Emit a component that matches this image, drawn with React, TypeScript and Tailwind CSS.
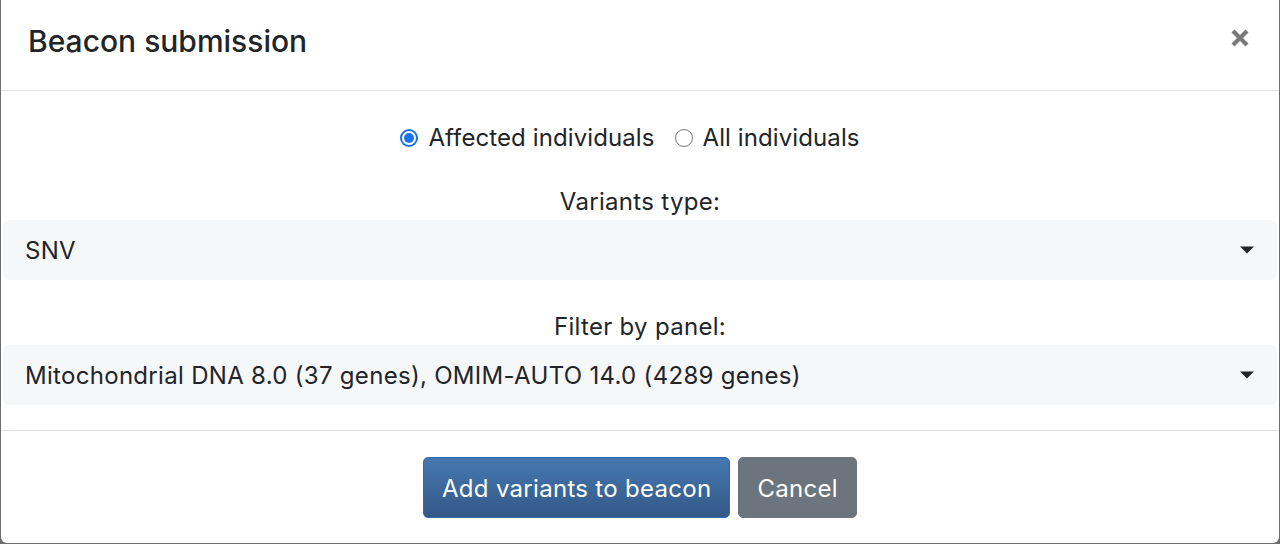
import React from "react";

function Radio({ checked }: { checked: boolean }) {
  return checked ? (
    <span className="flex h-[18px] w-[18px] shrink-0 items-center justify-center rounded-full bg-[#1a73e8]">
      <span className="flex h-[14px] w-[14px] items-center justify-center rounded-full bg-white">
        <span className="h-[10px] w-[10px] rounded-full bg-[#1a73e8]" />
      </span>
    </span>
  ) : (
    <span className="h-[18px] w-[18px] shrink-0 rounded-full border border-[#767676] bg-white" />
  );
}

function Caret() {
  return (
    <svg width="14" height="8" viewBox="0 0 14 8" className="shrink-0">
      <path d="M0 0.5 L14 0.5 L7 7.5 Z" fill="#212529" />
    </svg>
  );
}

function Select({ value }: { value: string }) {
  return (
    <div className="mx-[2px] flex h-[60px] items-center justify-between rounded-[6px] bg-[#f6f7f9] pl-[22px] pr-[23px]">
      <span className="pt-[2px]">{value}</span>
      <Caret />
    </div>
  );
}

export default function App() {
  return (
    <div
      className="h-[544px] w-[1280px] bg-[#6e6e6e] text-[#212529]"
      style={{ fontFamily: "Inter, 'Noto Sans', sans-serif" }}
    >
      <div className="ml-px flex h-[543px] w-[1278px] flex-col rounded-b-[6px] bg-white">
        <div className="flex h-[91px] shrink-0 items-start justify-between border-b border-[#dee2e6] pl-[27px] pr-[29px]">
          <h5 className="pt-[23px] text-[30px] font-medium leading-[36px]">
            Beacon submission
          </h5>
          <button className="mt-[28px]" aria-label="Close">
            <svg width="20" height="20" viewBox="0 0 20 20">
              <path
                d="M3 3 L17 17 M17 3 L3 17"
                stroke="#7a7a7a"
                strokeWidth="4.2"
                strokeLinecap="butt"
              />
            </svg>
          </button>
        </div>

        <div className="flex h-[339px] shrink-0 flex-col text-[24px] leading-[36px] tracking-[0.3px]">
          <div className="mt-[29px] flex h-[36px] items-center justify-center tracking-[0.1px]">
            <label className="flex items-center">
              <Radio checked />
              <span className="ml-[10px]">Affected individuals</span>
            </label>
            <label className="ml-[20px] mr-[20px] flex items-center">
              <Radio checked={false} />
              <span className="ml-[10px]">All individuals</span>
            </label>
          </div>
          <div className="mt-[27px] pt-px text-center">Variants type:</div>
          <Select value="SNV" />
          <div className="mt-[28px] pt-px text-center">Filter by panel:</div>
          <Select value="Mitochondrial DNA 8.0 (37 genes), OMIM-AUTO 14.0 (4289 genes)" />
        </div>

        <div className="flex flex-1 items-start justify-center gap-[8px] border-t border-[#dee2e6] pt-[26px] text-[24px] tracking-[0.3px]">
          <button className="h-[61px] rounded-[5px] border border-[#2f68b0] bg-gradient-to-b from-[#4679b1] to-[#335886] px-[18px] pt-[2px] leading-[36px] text-white">
            Add variants to beacon
          </button>
          <button className="h-[61px] rounded-[5px] border border-[#6c757d] bg-[#6c757d] px-[18px] pt-[2px] leading-[36px] text-white">
            Cancel
          </button>
        </div>
      </div>
    </div>
  );
}
